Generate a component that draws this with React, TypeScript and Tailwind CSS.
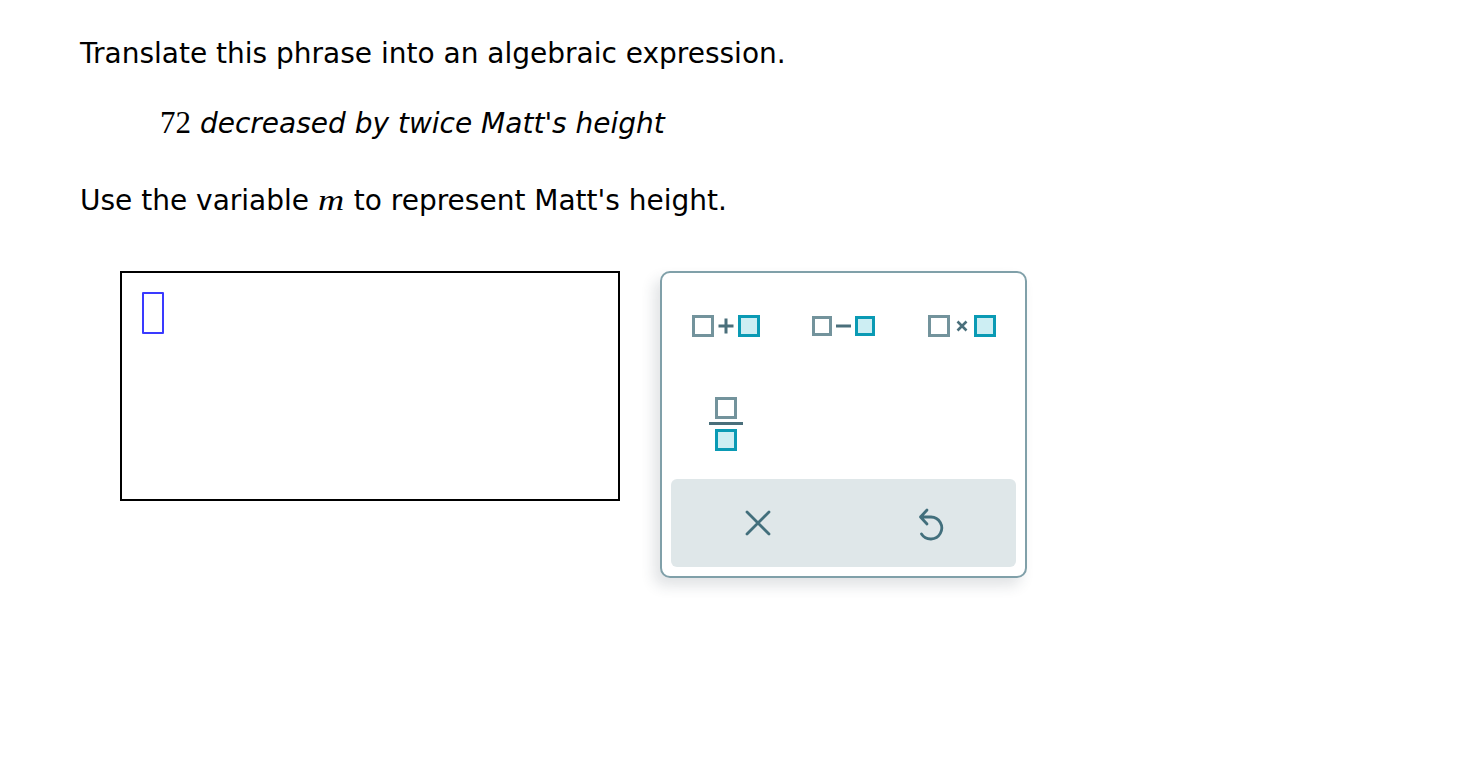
import React from "react";

const GrayBox = ({ s = 22 }: { s?: number }) => (
  <span
    className="inline-block border-[3px] border-[#73939c] bg-white"
    style={{ width: s, height: s }}
  />
);
const TealBox = ({ s = 22 }: { s?: number }) => (
  <span
    className="inline-block border-[3px] border-[#0a9ab4] bg-[#cdeef3]"
    style={{ width: s, height: s }}
  />
);

function PlusBtn() {
  return (
    <div className="flex items-center gap-[4px]">
      <GrayBox />
      <svg width="16" height="16" viewBox="0 0 16 16">
        <path d="M8 0.5v15M0.5 8h15" stroke="#4a6f7b" strokeWidth="3" />
      </svg>
      <TealBox />
    </div>
  );
}
function MinusBtn() {
  return (
    <div className="flex items-center gap-[4px]">
      <GrayBox s={20} />
      <svg width="15" height="16" viewBox="0 0 15 16">
        <path d="M0 8h15" stroke="#4a6f7b" strokeWidth="3" />
      </svg>
      <TealBox s={20} />
    </div>
  );
}
function TimesBtn() {
  return (
    <div className="flex items-center gap-[6px]">
      <GrayBox />
      <svg width="12" height="12" viewBox="0 0 12 12">
        <path d="M1.5 1.5l9 9M10.5 1.5l-9 9" stroke="#4a6f7b" strokeWidth="2.6" />
      </svg>
      <TealBox />
    </div>
  );
}
function FracBtn() {
  return (
    <div className="flex flex-col items-center">
      <GrayBox />
      <span className="mt-[3px] mb-[4px] block h-[3px] w-[34px] bg-[#4a6f7b]" />
      <TealBox />
    </div>
  );
}

const serif = { fontFamily: '"Liberation Serif", "Times New Roman", serif' };

export default function App() {
  return (
    <div
      className="min-h-[782px] w-full bg-white pl-[80px] pt-[38px] text-black"
      style={{ fontFamily: '"DejaVu Sans", Verdana, sans-serif' }}
    >
      <p className="h-[32px] text-[28px] leading-[32px]">
        Translate this phrase into an algebraic expression.
      </p>
      <p className="mt-[37px] h-[32px] pl-[80px] text-[28px] leading-[32px]">
        <span className="text-[31px] leading-none" style={serif}>
          72
        </span>{" "}
        <span className="italic">decreased by twice Matt's height</span>
      </p>
      <p className="mt-[46px] h-[32px] text-[28px] leading-[32px]">
        Use the variable{" "}
        <span
          className="inline-block origin-left scale-x-125 pr-[6px] text-[29px] italic leading-none"
          style={serif}
        >
          m
        </span>{" "}
        to represent Matt's height.
      </p>

      <div className="mt-[54px] flex items-start gap-[41px] pl-[40px]">
        <div className="h-[230px] w-[500px] border-2 border-black pl-[20px] pt-[19px]">
          <div className="h-[42px] w-[22px] rounded-[1px] border-[2.5px] border-[#3a3aff]" />
        </div>

        <div className="-ml-[1px] flex h-[307px] w-[367px] flex-col rounded-[10px] border-2 border-[#80a0a9] bg-white px-[9px] pb-[9px] pt-[4px] shadow-[-6px_8px_14px_rgba(40,60,70,0.14)]">
          <div className="grid grid-cols-3">
            <div className="flex h-[98px] items-center justify-center pr-[6px]">
              <PlusBtn />
            </div>
            <div className="flex h-[98px] items-center justify-center">
              <MinusBtn />
            </div>
            <div className="flex h-[98px] items-center justify-center pl-[6px]">
              <TimesBtn />
            </div>
            <div className="flex h-[98px] items-center justify-center pr-[6px]">
              <FracBtn />
            </div>
          </div>
          <div className="mt-auto grid h-[88px] grid-cols-2 rounded-[6px] bg-[#dfe7e9]">
            <div className="flex items-center justify-center pl-[2px]">
              <svg width="26" height="26" viewBox="0 0 26 26">
                <path
                  d="M2 2l22 22M24 2L2 24"
                  stroke="#426f7c"
                  strokeWidth="2.8"
                  strokeLinecap="round"
                />
              </svg>
            </div>
            <div className="flex items-center justify-center pl-[2px] pt-[2px]">
              <svg width="30" height="36" viewBox="0 0 30 36" fill="none">
                <path
                  d="M11 4L4.5 11l6.5 7M4.5 11h10.5A11 11 0 1 1 5.5 28"
                  stroke="#426f7c"
                  strokeWidth="2.8"
                  strokeLinecap="round"
                  strokeLinejoin="round"
                />
              </svg>
            </div>
          </div>
        </div>
      </div>
    </div>
  );
}
